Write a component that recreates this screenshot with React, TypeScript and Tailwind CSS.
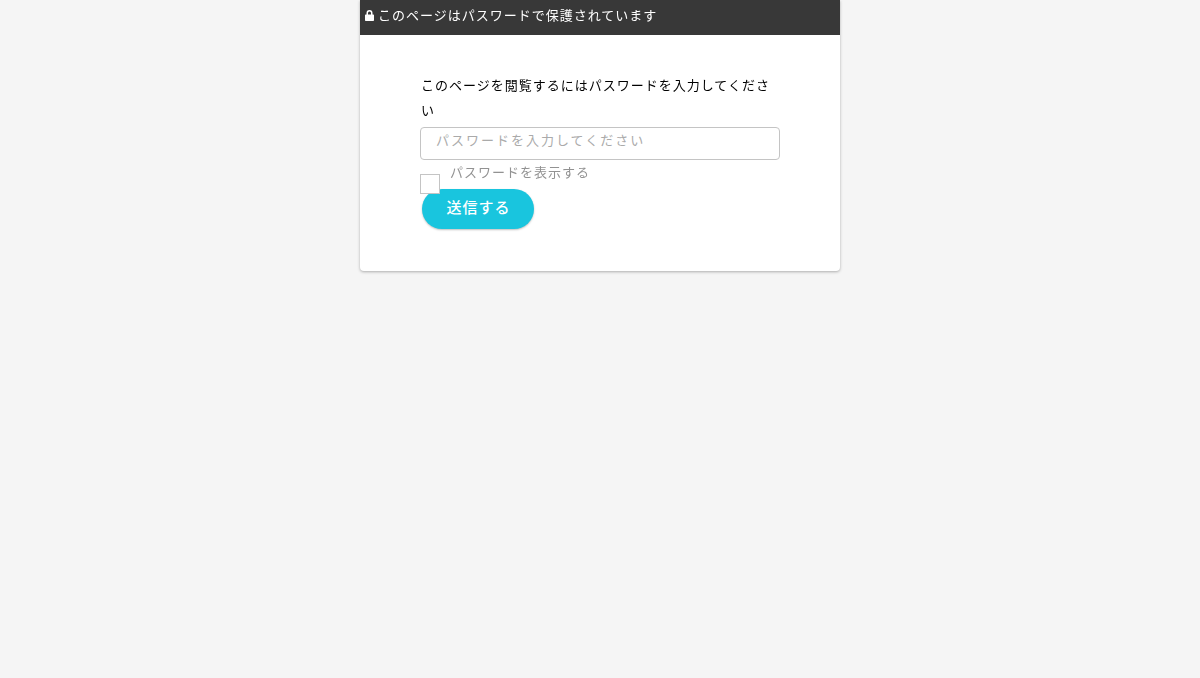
export default function App() {
  return (
    <div
      className="min-h-[678px] bg-[#f5f5f5] text-[13px] tracking-[1px]"
      style={{ fontFamily: "'Noto Sans CJK JP', 'Noto Sans', sans-serif" }}
    >
      <div className="mx-auto w-[480px] overflow-hidden rounded-b-[4px] bg-white shadow-[0_1px_3px_rgba(0,0,0,0.3)]">
        {/* Header */}
        <div className="flex h-[35px] items-center gap-[4px] bg-[#383838] pl-[5px] pb-[6px] text-white">
          <svg className="mt-[1px] h-[11px] w-[9px]" viewBox="0 0 9 11" fill="currentColor" aria-hidden="true">
            <path d="M1.500 4.500V3a3 3 0 0 1 6 0v1.500H8c.6 0 1 .4 1 1V10c0 .6-.4 1-1 1H1c-.6 0-1-.4-1-1V5.500c0-.6.400-1 1-1h.5zm1.500 0h3V3a1.500 1.500 0 0 0-3 0v1.500z" />
          </svg>
          <span className="leading-[25px] will-change-transform">このページはパスワードで保護されています</span>
        </div>

        {/* Form */}
        <div className="px-[60px] pt-[37px] pb-[42px]">
          <p className="pl-[1px] leading-[25px] text-black will-change-transform">このページを閲覧するにはパスワードを入力してください</p>
          <input
            type="password"
            placeholder="パスワードを入力してください"
            className="mt-[5px] block h-[33px] w-full rounded-[4px] border border-[#c4c4c4] bg-white px-[15px] pb-[9px] text-[13px] tracking-[2px] outline-none placeholder:text-[#aaaaaa]"
          />
          <div className="-mt-[1px] flex items-start gap-[10px]">
            <span className="mt-[15px] h-[20px] w-[20px] shrink-0 border border-[#c4c4c4] bg-white" />
            <label className="leading-[25px] text-[#929292] will-change-transform">パスワードを表示する</label>
          </div>
          <button
            type="button"
            className="-mt-[5px] ml-[2px] block h-[40px] w-[112px] rounded-full bg-[#19c5de] pb-[3px] pl-[1px] text-[15px] font-medium text-white shadow-[0_1px_2px_rgba(0,0,0,0.25)]"
          >
            <span className="will-change-transform">送信する</span>
          </button>
        </div>
      </div>
    </div>
  );
}
